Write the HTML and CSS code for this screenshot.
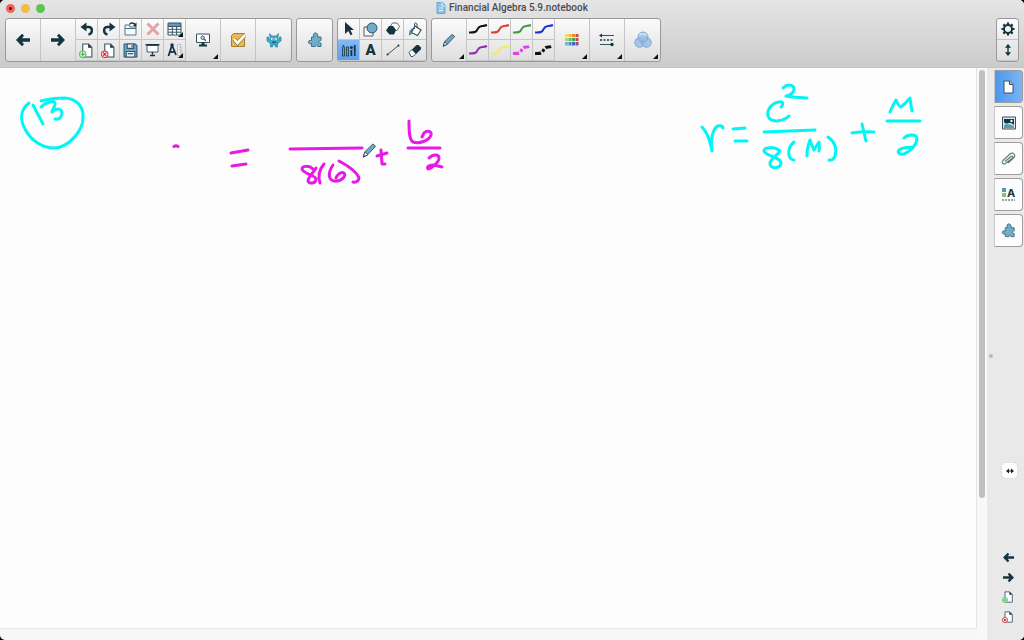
FILE: index.html
```
<!DOCTYPE html>
<html lang="en">
<head>
<meta charset="utf-8">
<title>Financial Algebra 5.9.notebook</title>
<link rel="stylesheet" href="styles.css">
</head>
<body>
<svg class="defs" aria-hidden="true">
  <symbol id="left" viewBox="0 0 14 14"><path d="M0 7l6-6.200 2 2L6 5.300h8v3.400H6l2 2.500-2 2z" fill="#15343f"/></symbol>
  <symbol id="right" viewBox="0 0 14 14"><path d="M14 7L8 .8l-2 2 2 2.500H0v3.400h8l-2 2.500 2 2z" fill="#15343f"/></symbol>
  <symbol id="page" viewBox="0 0 14 14"><path d="M3.500 1h5.500l3 3v9H3.500z" fill="#fff" stroke="#36535d"/><path d="M8.500 1l3.500 3.500H8.500z" fill="#15343f"/></symbol>
  <symbol id="addpage" viewBox="0 0 14 14"><use href="#page"/><circle cx="3.500" cy="10.500" r="3" fill="#e5f8e4" stroke="#4cc458"/><path d="M3.500 8.500v4M1.500 10.500h4" stroke="#35ad42"/></symbol>
  <symbol id="delpage" viewBox="0 0 14 14"><use href="#page"/><circle cx="3.500" cy="10.500" r="3" fill="#ffe9ea" stroke="#d2364a"/><path d="M2 9l3 3M5 9l-3 3" stroke="#c62238"/></symbol>
  <symbol id="puzzle" viewBox="0 0 16 16"><path d="M4.500 5H7C5.500 2 7 1 8.500 1S11.500 2.500 10.500 5H14v3.500c-2.500-.5-2.500 3 0 2.500v3.500H10.500c.5-2-2.500-2-2 0H4.500V11.500c-4 1.500-4.500-4 0-3z" fill="#71acc9" stroke="#3f7089"/></symbol>
  <symbol id="pencil" viewBox="0 0 16 16"><path d="M1.500 15l1.500-5L11.500 1.500l3 2.500L6 13z" fill="#69a8c7" stroke="#34515d"/><path d="M1.500 15L3 10l3 3z" fill="#f4f8fa" stroke="#34515d"/><path d="M1 15.500l.7-2.200 1.500 1.400z" fill="#15343f"/></symbol>
  <symbol id="stroke" viewBox="0 0 20 12"><path d="M1 9.500c3 0 6 .3 7.500-1.500C10 5.500 10.500 3.500 13 3.200s3.500-.2 6-1.200" fill="none" stroke="currentColor"/></symbol>
</svg>

<div class="window">
<header>
  <div class="titlebar">
    <div class="lights"><i class="red"></i><i class="yellow"></i><i class="green"></i></div>
    <h1><svg width="10" height="12" viewBox="0 0 10 12"><path d="M1 .5h5.500L9 3v8.500H1z" fill="#8cc3e6" stroke="#69a8cf"/><path d="M6 .5V4h3M3 6h4M3 8.500h4" fill="none" stroke="#d9effb"/></svg>Financial Algebra 5.9.notebook</h1>
    <div></div>
  </div>

  <div class="toolbar">
    <div class="group">
      <button class="big" aria-label="Previous page"><svg width="14" height="14"><use href="#left"/></svg></button>
      <button class="big" aria-label="Next page"><svg width="14" height="14"><use href="#right"/></svg></button>
      <div class="grid five">
        <button aria-label="Undo"><svg width="14" height="14" viewBox="0 0 14 14"><path d="M3 5h5.500c4.500 0 4.500 6.500 0 7.500" fill="none" stroke="#15343f" stroke-width="2.400"/><path d="M6.500 .5L.5 5l6 4.500z" fill="#15343f"/></svg></button>
        <button aria-label="Redo"><svg width="14" height="14" viewBox="0 0 14 14"><path d="M11 5H5.500C1 5 1 11.500 5.500 12.500" fill="none" stroke="#15343f" stroke-width="2.400"/><path d="M7.500 .5l6 4.500-6 4.500z" fill="#15343f"/></svg></button>
        <button aria-label="Open"><svg width="16" height="16" viewBox="0 0 16 16"><path d="M2 14V4h4l1 2h6v8zM2 7.500h11" fill="#f8fbfc" stroke="#4d7585"/><path d="M6.500 3.500c1-2 4-2 5.500 0" fill="none" stroke="#15343f" stroke-width="1.400"/><path d="M13.500 1.500V6L10 4.500z" fill="#15343f"/></svg></button>
        <button aria-label="Delete"><svg width="14" height="14" viewBox="0 0 14 14"><path d="M1.500 1.500l11 11M12.500 1.500l-11 11" stroke="#e3a3a5" stroke-width="3"/></svg></button>
        <button class="more" aria-label="Table"><svg width="15" height="14" viewBox="0 0 15 14"><path d="M1 1h13v12H1z" fill="#fff"/><path d="M1 1h13v3.500H1z" fill="#5f9cc0"/><path d="M1 1h13v12H1zM1 4.500h13M1 7.300h13M1 10.200h13M5.300 4.500V13M9.600 4.500V13" fill="none" stroke="#355461"/></svg></button>
        <button aria-label="Add page"><svg width="15" height="15"><use href="#addpage"/></svg></button>
        <button aria-label="Delete page"><svg width="15" height="15"><use href="#delpage"/></svg></button>
        <button aria-label="Save"><svg width="15" height="15" viewBox="0 0 14 14"><path d="M1 1h10.500L13 2.500V13H1z" fill="#6ba5c8" stroke="#2e5870"/><path d="M4 1h6v4H4zM3 8h8v5H3z" fill="#e9f1f5" stroke="#2e5870"/><path d="M8.500 2v2M4.500 10h5" stroke="#15343f"/></svg></button>
        <button aria-label="Screen shade"><svg width="15" height="14" viewBox="0 0 15 14"><path d="M2 2.500h11V9H2z" fill="#fff" stroke="#3f6272"/><path d="M.5 1.800h14" stroke="#15343f" stroke-width="1.600"/><path d="M7.500 9v2.500M5 12.500h5" stroke="#15343f" stroke-width="1.400"/></svg></button>
        <button class="more" aria-label="Measurement tools"><svg width="15" height="14" viewBox="0 0 15 14"><path d="M5 2L1.500 13M5 2l4 10M3 8.500c2 1 3 1 5-.5" fill="none" stroke="#15343f" stroke-width="1.800"/><circle cx="5" cy="2" r="1.700" fill="#15343f"/><path d="M10.500 1.500H14v11h-3.500zM12 4h2M12 6.500h2M12 9h2" fill="#f4f4f4" stroke="#b4bdc1"/></svg></button>
      </div>
      <button class="big more" aria-label="Screen capture"><svg width="16" height="14" viewBox="0 0 16 14"><path d="M1.500 1h13v8.500h-13z" fill="#fff" stroke="#355461"/><circle cx="7.700" cy="4.700" r="1.700" fill="#cfe4ef" stroke="#355461"/><path d="M9 6l1.800 1.800" stroke="#355461" stroke-width="1.300"/><path d="M6.500 9.500h3v2H12V13.500H4v-2h2.500z" fill="#15343f"/></svg></button>
      <button class="big" aria-label="Response"><svg width="16" height="16" viewBox="0 0 16 16"><path d="M3.500 1.500h11v13h-13v-11z" fill="#e8b955" stroke="#a48037"/><path d="M4 7l3.500 4L15 3" fill="none" stroke="#8d6b2b" stroke-width="4"/><path d="M4 7l3.500 4L15 3" fill="none" stroke="#fff" stroke-width="2.600"/></svg></button>
      <button class="big" aria-label="Activity monster"><svg width="16" height="16" viewBox="0 0 16 16"><path d="M4 5L3.500 1.500 6 4h4l2.500-2.500L12 5v2.500l1.500-.5V5H15v4l-3 2-.5 2v2H9.500v-2h-3v2h-2v-2L4 11 1 9V5h1.500v2l1.500.5z" fill="#3ba9ce" stroke="#287f9e" stroke-width=".7"/><circle cx="6.200" cy="7" r="1.200" fill="#fff"/><circle cx="9.800" cy="7" r="1.200" fill="#fff"/><path d="M6 7h.8M9.500 7h.8M6 10.200h4" stroke="#123b4b"/></svg></button>
    </div>

    <div class="group">
      <button class="big" aria-label="Add-ons"><svg width="16" height="16"><use href="#puzzle"/></svg></button>
    </div>

    <div class="group">
      <div class="grid four">
        <button aria-label="Select"><svg width="14" height="14" viewBox="0 0 14 14"><path d="M3 0l9 8H8.300l2.200 4.300-2 1L6.300 9 3 12z" fill="#15343f"/></svg></button>
        <button aria-label="Shapes"><svg width="15" height="15" viewBox="0 0 15 15"><path d="M1 5h9v9H1z" fill="#f4f7f8" stroke="#46636f"/><circle cx="9" cy="6" r="5" fill="#71aacb" stroke="#315568"/></svg></button>
        <button aria-label="Regular polygons"><svg width="14" height="14" viewBox="0 0 14 14"><path d="M6.500 1H11l2.500 3.500-2.500 4H6.500L4 5z" fill="#fff" stroke="#536b75"/><path d="M3 4h4l3 4-2 4.500H3.500L0 8.500z" fill="#15343f"/></svg></button>
        <button aria-label="Fill"><svg width="15" height="15" viewBox="0 0 15 15"><path d="M7 4l6 4-3.500 5.500-6-3z" fill="#fff" stroke="#36535d" stroke-width="1.200"/><path d="M6.500 7V2c0-2 3-1 2.500 1v3" fill="none" stroke="#36535d"/><path d="M5.500 6.500C1 7.500 2 10 1.500 13 4 12 4 10 3.500 9z" fill="#6ba5c8" stroke="#36535d" stroke-width=".7"/></svg></button>
        <button class="active" aria-label="Pens" aria-pressed="true"><svg width="15" height="13" viewBox="0 0 15 13"><path d="M1.500 12V4l1-3 1 3v8zM5.500 12V3h2v9z" fill="#719ebb" stroke="#15343f" stroke-width=".8"/><path d="M9.500 6h1.800v6H9.500zM13 6h1.500v6H13z" fill="#15343f"/><circle cx="10.400" cy="3.500" r="1.500" fill="#15343f"/><path d="M13.700 1v6" stroke="#15343f" stroke-width="1.800"/></svg></button>
        <button class="letter" aria-label="Text">A</button>
        <button aria-label="Lines"><svg width="14" height="12" viewBox="0 0 14 12"><path d="M1.500 10.500l11-9" stroke="#36535d"/><circle cx="1.500" cy="10.500" r="1" fill="#15343f"/><circle cx="12.500" cy="1.500" r="1" fill="#15343f"/></svg></button>
        <button aria-label="Eraser"><svg width="14" height="13" viewBox="0 0 14 13"><path d="M1 8.500l3-3 4 4-3 3H3z" fill="#fff" stroke="#36535d"/><path d="M4 5.500L8.500 1h2L13 3.500v1.700L8 10z" fill="#15343f"/></svg></button>
      </div>
    </div>

    <div class="group">
      <button class="big more" aria-label="Pen type"><svg width="14" height="14"><use href="#pencil"/></svg></button>
      <div class="grid four">
        <button class="ink black" aria-label="Black pen"><svg width="20" height="12"><use href="#stroke"/></svg></button>
        <button class="ink scarlet" aria-label="Red pen"><svg width="20" height="12"><use href="#stroke"/></svg></button>
        <button class="ink forest" aria-label="Green pen"><svg width="20" height="12"><use href="#stroke"/></svg></button>
        <button class="ink blue" aria-label="Blue pen"><svg width="20" height="12"><use href="#stroke"/></svg></button>
        <button class="ink purple" aria-label="Purple pen"><svg width="20" height="12"><use href="#stroke"/></svg></button>
        <button class="ink lemon" aria-label="Yellow highlighter"><svg width="20" height="12"><use href="#stroke"/></svg></button>
        <button class="ink pink dashed" aria-label="Magenta dashed pen"><svg width="20" height="12"><use href="#stroke"/></svg></button>
        <button class="ink black dashed" aria-label="Black dashed pen"><svg width="20" height="12"><use href="#stroke"/></svg></button>
      </div>
      <button class="big more" aria-label="Color"><svg width="14" height="14" viewBox="0 0 14 14"><path d="M0 1h3v3H0z" fill="#f4de4b"/><path d="M3.500 1h3v3h-3z" fill="#f3b442"/><path d="M7 1h3v3H7z" fill="#e88b3f"/><path d="M10.500 1h3v3h-3z" fill="#d64a41"/><path d="M0 5h3v3H0z" fill="#b6d85a"/><path d="M3.500 5h3v3h-3z" fill="#62bd55"/><path d="M7 5h3v3H7z" fill="#46a54d"/><path d="M10.500 5h3v3h-3z" fill="#b5524b"/><path d="M0 9h3v3.500H0z" fill="#65bde4"/><path d="M3.500 9h3v3.500h-3z" fill="#3d8bd0"/><path d="M7 9h3v3.500H7z" fill="#4a62ba"/><path d="M10.500 9h3v3.500h-3z" fill="#865097"/></svg></button>
      <button class="big more" aria-label="Line style"><svg width="16" height="14" viewBox="0 0 16 14"><path d="M2 2.500h13M1 11.500h12" stroke="#36535d"/><path d="M1 7h14" stroke="#15343f" stroke-width="1.500" stroke-dasharray="2 1.500"/><path d="M0 2.500l3-2v4z" fill="#15343f"/><circle cx="13" cy="11.500" r="1.700" fill="#15343f"/></svg></button>
      <button class="big more" aria-label="Transparency"><svg width="18" height="18" viewBox="0 0 18 18"><g fill="#93bce3" fill-opacity=".8" stroke="#7b9dc5" stroke-width=".8"><circle cx="5.500" cy="11.500" r="4.800"/><circle cx="12.500" cy="11.500" r="4.800"/><circle cx="9" cy="6" r="5"/></g><path d="M5.500 4.500c1-2 5-2.500 7 0" fill="none" stroke="#d6e9f8" stroke-width="1.500"/></svg></button>
    </div>

    <div class="group end">
      <div class="grid one">
        <button aria-label="Customize toolbar"><svg width="14" height="14" viewBox="0 0 14 14"><circle cx="7" cy="7" r="4" fill="none" stroke="#15343f" stroke-width="2"/><path d="M7 .5v2.500M7 11v2.500M.5 7H3M11 7h2.500M2.400 2.400l1.800 1.800M9.800 9.800l1.800 1.800M11.600 2.400L9.800 4.200M4.200 9.800l-1.800 1.800" stroke="#15343f" stroke-width="2.200"/></svg></button>
        <button aria-label="Move toolbar"><svg width="8" height="12" viewBox="0 0 8 12"><path d="M4 2v8" stroke="#15343f" stroke-width="1.400"/><path d="M4 0l3 3.800H1zM4 12L1 8.200h6z" fill="#15343f"/></svg></button>
      </div>
    </div>
  </div>
</header>

<div class="content">
  <main>
    <svg class="notes" role="img" aria-label="13. = / 8(6) + 6/2. r = c squared / 8(M) + M/2">
      <g transform="translate(0 -68)">
        <g class="cyan">
          <path d="M29 103C20 110 20 120 25 129C31 141 43 148 54 148C68 148 83 131 83 118C84 107 77 99 65 98C57 98 48 99 41 101"/>
          <path d="M33 105C36 111 40 118 43 124M41 107C46 102 54 100 55 103C56 106 51 111 52 112C57 107 62 109 62 113C62 117 59 120 55 119"/>
          <path d="M702 127C707 132 711 143 712 151C710 140 713 128 718 126Q722 125 723 128M733 129L745 128M735 141L747 141"/>
          <path d="M781 107C784 104 783 101 779 102C771 103 765 112 769 118C773 123 784 121 789 116M783 88C788 83 794 85 794 89C794 93 789 96 786 96Q789 97 807 98"/>
          <path d="M764 132Q789 131 815 130M780 151C774 146 764 147 764 151C765 156 781 157 781 163C780 169 771 169 770 164C769 160 777 156 780 151"/>
          <path d="M794 142C786 149 788 160 794 160M807 156Q807 147 810 140Q812 146 814 150Q817 145 819 142Q820 147 819 151M828 137C835 142 837 149 835 156Q833 161 829 160"/>
          <path d="M852 133Q863 131 874 132M862 124Q864 133 866 141M890 112Q893 105 896 100Q899 107 901 107Q906 103 910 98Q911 106 912 111M887 121L920 121"/>
          <path d="M904 138C908 134 916 134 917 138C917 145 911 151 904 154C899 155 897 152 899 150C903 147 908 148 913 147"/>
        </g>
        <g class="magenta">
          <path d="M174 146.500Q176 145 178 146.500M231 153L248 150M232 166L246 164M290 149L362 148"/>
          <path d="M313 169C309 165 302 166 302 169C303 174 316 175 316 179C316 184 309 184 308 181C308 177 314 172 316 168M324 164C319 170 318 177 320 183"/>
          <path d="M333 165C328 172 328 180 334 181C341 182 347 176 344 173C341 171 337 175 336 178M339 161C350 167 357 172 359 178Q358 183 353 182"/>
          <path d="M377 156L387 153M381 150L382 164L385 164M409 121C409 129 409 140 413 142C419 144 429 141 431 135C432 131 427 130 424 133L422 137"/>
          <path d="M408 148L440 148M429 158C433 154 439 154 439 158C439 163 430 169 428 169C426 166 431 165 434 165Q438 166 442 167"/>
        </g>
        <use href="#pencil" x="362" y="142" width="15" height="16"/>
      </g>
    </svg>
  </main>
  <div class="scrollbar"><div class="thumb"></div></div>
  <aside>
    <div class="grip"></div>
    <nav>
      <button class="active" aria-label="Page sorter"><svg width="11" height="14" viewBox="0 0 11 14"><path d="M1 1h5.500L10 4.500V13H1z" fill="#fff" stroke="#36535d"/><path d="M6.500 1v3.500H10" fill="#9fb1b9" stroke="#36535d"/></svg></button>
      <button aria-label="Gallery"><svg width="14" height="14" viewBox="0 0 14 14"><path d="M.5 1h13v12H.5z" fill="#d8eaf0" stroke="#36535d"/><path d="M2 3h10v6C7 4 5 10 2 6z" fill="#15343f"/><path d="M2 9c3-2 6-1 10 1v2H2z" fill="#619cab"/><circle cx="9.500" cy="5" r="1.200" fill="#fff"/></svg></button>
      <button aria-label="Attachments"><svg width="15" height="14" viewBox="0 0 15 14"><path d="M4 9.500l6-5c1.500-1 2.500.5 1.500 1.500l-7 5.500c-2.500 1.500-4-1-2.500-3L9 2c3-2.200 6 .8 4 3.500L7 11" fill="none" stroke="#627f80" stroke-width="1.200"/></svg></button>
      <button aria-label="Properties"><svg width="15" height="15" viewBox="0 0 15 15"><path d="M1 1h4v4H1z" fill="#4f9cab"/><path d="M1 6h4v4H1z" fill="#74c879"/><text x="6" y="10">A</text><path d="M1 13h13" stroke="#36535d" stroke-dasharray="2 1"/></svg></button>
      <button aria-label="Add-ons"><svg width="15" height="15"><use href="#puzzle"/></svg></button>
    </nav>
    <button class="resize" aria-label="Resize sidebar"><svg width="8" height="6" viewBox="0 0 8 6"><path d="M2 3h4" stroke="#222"/><path d="M0 3l3-2.500v5zM8 3L5 .5v5z" fill="#222"/></svg></button>
    <div class="pages">
      <button aria-label="Previous page"><svg width="11" height="11"><use href="#left"/></svg></button>
      <button aria-label="Next page"><svg width="11" height="11"><use href="#right"/></svg></button>
      <button aria-label="Add page"><svg width="12" height="12"><use href="#addpage"/></svg></button>
      <button aria-label="Delete page"><svg width="12" height="12"><use href="#delpage"/></svg></button>
    </div>
  </aside>
</div>
</div>
</body>
</html>
```
FILE: styles.css
```
* {box-sizing:border-box;}
body {margin:0;background:#000;font-family:Roboto,"Liberation Sans",sans-serif;}
button {display:flex;align-items:center;justify-content:center;margin:0;padding:0;border:0;background:none;color:#15343f;}
svg {display:block;flex:none;}
.defs {position:absolute;width:0;height:0;}
.window {display:flex;flex-direction:column;height:100vh;border-radius:5px;overflow:hidden;background:#f7f7f7;}

/* title and toolbar */
header {background:linear-gradient(#e5e5e5,#cbcbcb);border-bottom:1px solid #c4c4c4;}
.titlebar {display:grid;grid-template-columns:1fr auto 1fr;align-items:center;height:16px;}
.lights {display:flex;gap:6px;padding-left:6px;}
.lights i {width:9px;height:9px;border-radius:50%;}
.lights .red {background:radial-gradient(circle,#611614 1px,#ec655c 2px);}
.lights .yellow {background:#f2bb48;}
.lights .green {background:#5dc452;}
h1 {display:flex;align-items:center;gap:3px;margin:0;font-size:10px;font-weight:500;line-height:16px;color:#4c4c4c;}
.toolbar {display:flex;gap:6px;padding:3px 6px 6px;}
.group {display:flex;height:42px;border-radius:3px;background:linear-gradient(#fbfbfb,#dedede);box-shadow:0 0 0 1px #999;overflow:hidden;}
.end {margin-left:auto;}
.group button {position:relative;border-right:1px solid #c5c5c5;}
.group > :last-child, .grid.four:last-child button:nth-child(4n), .grid.one button {border-right:0;}
.big {width:35px;}
.grid {display:grid;grid-auto-rows:21px;}
.grid button {border-bottom:1px solid #c5c5c5;}
.five {grid-template-columns:repeat(5,22px);}
.four {grid-template-columns:repeat(4,22px);}
.one {grid-template-columns:21px;}
.more::after {content:"";position:absolute;right:2px;bottom:2px;border:solid transparent;border-width:5px 0 0 5px;border-right:0;border-bottom:5px solid #111;border-top:0;}
.group .active {background:linear-gradient(#84b9f3,#5b9ff0);}
.letter {font:900 15px Roboto,sans-serif;}
.ink svg {stroke-width:2;}
.black {color:#111;}
.scarlet {color:#df3d35;}
.forest {color:#439b43;}
.blue {color:#1d32d8;}
.purple {color:#8d32a5;}
.lemon {color:#f1ec62;}
.pink {color:#df42df;}
.dashed svg {stroke-dasharray:6 2 3 2;stroke-width:3;}

/* notebook page */
.content {display:flex;flex:1;min-height:0;}
main {flex:1;min-width:0;margin-bottom:11px;background:#fdfdfd;border-right:1px solid #e6e6e6;border-bottom:1px solid #e6e6e6;}
.notes {width:100%;height:100%;fill:none;stroke-linecap:round;stroke-linejoin:round;}
.cyan {stroke:#00f5f5;stroke-width:3;}
.magenta {stroke:#e619e6;stroke-width:3;}
.scrollbar {width:10px;padding:2px 2px 0;background:#f8f8f8;}
.thumb {height:75%;border-radius:3px;background:#c1c1c1;}

/* side tabs */
aside {position:relative;display:flex;flex-direction:column;align-items:flex-end;width:37px;padding:2px 1px 17px 0;background:#e9e9e9;}
.grip {position:absolute;left:2px;top:50%;width:4px;height:4px;border-radius:50%;background:#b9b9b9;}
nav {display:flex;flex-direction:column;gap:3px;}
nav button {width:29px;height:33px;border:1px solid #9d9d9d;border-left-color:#c8c8c8;border-radius:0 4px 4px 0;background:#fcfcfc;}
nav .active {background:linear-gradient(90deg,#4b96ef,#7db4f5);}
nav text {font:bold 11px Inter,sans-serif;fill:#15343f;}
.resize {width:15px;height:15px;margin:auto 6px 0 0;border-radius:3px;background:#fff;box-shadow:0 0 1px #999;}
.pages {display:flex;flex-direction:column;gap:8px;margin:73px 9px 0 0;}
.pages button {width:12px;height:12px;}
```
